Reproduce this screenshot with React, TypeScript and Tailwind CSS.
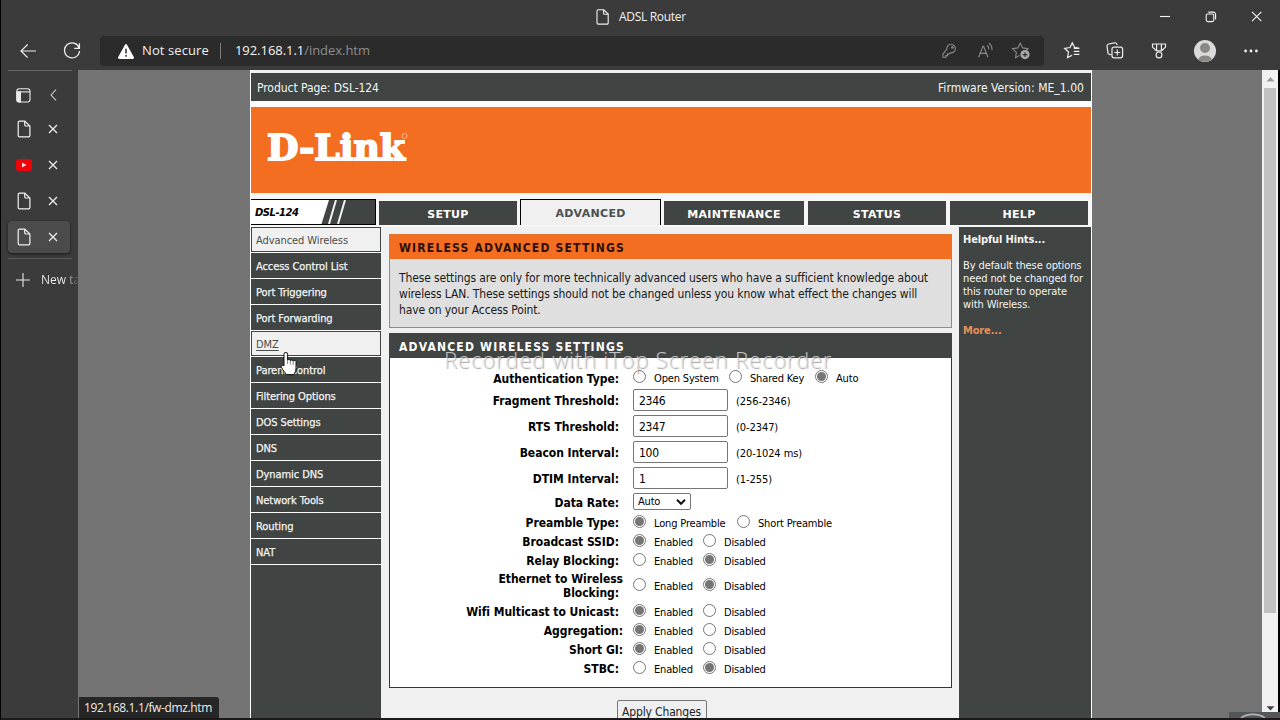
import React from "react";
import clsx from "clsx";

const NAV_ITEMS = [
  "Advanced Wireless",
  "Access Control List",
  "Port Triggering",
  "Port Forwarding",
  "DMZ",
  "Parent Control",
  "Filtering Options",
  "DOS Settings",
  "DNS",
  "Dynamic DNS",
  "Network Tools",
  "Routing",
  "NAT",
];

const PageIcon: React.FC = () => (
  <svg width="14" height="18" viewBox="0 0 14 18" fill="none" stroke="#f2f2f2" strokeWidth="1.2">
    <path d="M2.6 1.1h5.2L12.9 6v9.4a1.4 1.4 0 0 1-1.4 1.4H2.6a1.4 1.4 0 0 1-1.4-1.4V2.5a1.4 1.4 0 0 1 1.4-1.4z" />
    <path d="M7.7 1.2v3.6a1.2 1.2 0 0 0 1.2 1.2h3.9" />
  </svg>
);

const CloseIcon: React.FC = () => (
  <svg width="10" height="10" viewBox="0 0 10 10" stroke="#ededed" strokeWidth="1.3">
    <path d="M1 1l8 8M9 1L1 9" />
  </svg>
);

const TitleBar: React.FC = () => (
  <div className="flex h-[34px] shrink-0 items-center">
    <div className="flex flex-1 items-center pl-[594px]">
      <div className="flex h-[17px] w-[15px] items-center justify-center">
        <svg width="13" height="16" viewBox="0 0 13 16" fill="none" stroke="#f2f2f2" strokeWidth="1.1">
          <path d="M2.2.8h5.6l4.4 4.3v8.8a1.2 1.2 0 0 1-1.2 1.2H2.2A1.2 1.2 0 0 1 1 13.9V2A1.2 1.2 0 0 1 2.2.8z" />
          <path d="M7.6.9v3.3a1 1 0 0 0 1 1h3.5" />
        </svg>
      </div>
      <span className="pl-[9px] text-[12px] tracking-[-0.3px] text-[#f2f2f2]">ADSL Router</span>
    </div>
    <svg className="mr-[17px]" width="106" height="14" viewBox="0 0 106 14" fill="none" stroke="#f5f5f5" strokeWidth="1.1">
      <path d="M3 6.5h10" />
      <rect x="49.2" y="4" width="7.6" height="7.6" rx="1.6" />
      <path d="M51.3 2.1h5a2.3 2.3 0 0 1 2.3 2.3v5" />
      <path d="M95 1.8l9.4 9.4M104.4 1.8L95 11.2" />
    </svg>
  </div>
);

const AddressBar: React.FC = () => (
  <div className="flex h-[36px] shrink-0 items-center pb-[2px]">
    <svg className="ml-[19px]" width="16" height="14" viewBox="0 0 16 14" fill="none" stroke="#eee" strokeWidth="1.2">
      <path d="M16 7H1M7.6.5L1 7l6.6 6.5" />
    </svg>
    <svg className="ml-[27px]" width="18" height="18" viewBox="0 0 18 18" fill="none" stroke="#eee" strokeWidth="1.3">
      <path d="M16.2 6.2A7.5 7.5 0 1 0 16.5 9" />
      <path d="M16.4 1.2v5.2h-5.2" />
    </svg>
    <div className="ml-[19px] flex h-[30px] w-[944px] items-center rounded-[4px] bg-[#2b2b2b] pl-[18px]">
      <svg width="16" height="15" viewBox="0 0 16 15">
        <path d="M7 .8a1.2 1.2 0 0 1 2 0l6.8 12.3a1.2 1.2 0 0 1-1 1.8H1.2a1.2 1.2 0 0 1-1-1.8z" fill="#fff" />
        <path d="M8 4.8v4.8M8 11v1.7" stroke="#2b2b2b" strokeWidth="1.5" />
      </svg>
      <span className="pl-[8px] text-[13px] tracking-[0.1px] text-[#f0f0f0]">Not secure</span>
      <span className="ml-[11px] h-[16px] w-px bg-[#7c7c7c]" />
      <span className="pl-[14px] text-[13px] tracking-[-0.04px] text-[#f5f5f5]">
        192.168.1.1<span className="text-[#8d8d8d]">/index.htm</span>
      </span>
      <svg className="ml-auto mr-[11px]" width="92" height="18" viewBox="0 0 92 18" fill="none" stroke="#8a8a8a" strokeWidth="1.1">
        <path d="M5.8 7.2a4.3 4.3 0 1 1 3.4 3.6l-1 1.1H6.6v1.7H4.9v1.7H1.9v-3z" />
        <circle cx="11.4" cy="5.4" r=".8" />
        <path d="M37.6 15.3l4.4-11h.6l4.4 11M39.2 11.4h6.2" />
        <path d="M46 3.2a5 5 0 0 1 1.8 4.2M48 1.2a8 8 0 0 1 3 6.8" />
        <path d="M78.5 13.6l-4 2.1.9-5.3-3.9-3.7 5.3-.8 2.4-4.8 2.4 4.8 5.3.8-1.8 1.8" />
        <circle cx="84" cy="12.6" r="4.6" fill="#a9a9a9" stroke="none" />
        <path d="M81.6 12.6h4.8M84 10.2v4.8" stroke="#2b2b2b" />
      </svg>
    </div>
    <svg className="ml-[18px]" width="198" height="24" viewBox="0 0 198 24" fill="none" stroke="#ededed" strokeWidth="1.2">
      <path d="M16.8 9l-4.2-.6-2.3-4.6L8 8.5l-5.4.8 3.9 3.7-1 5.6 4.600-2.300M11.800 12.300h5.600M11.800 15.400h5.600M11.800 9.300h5.600" />
      <path d="M49.500 15.600l-2-.2a2 2 0 0 1-1.600-2L45 7.200a2 2 0 0 1 1.600-2.200l6-1.200a2 2 0 0 1 2.300 1.500l.2.900" />
      <rect x="50" y="8.2" width="10.6" height="10.6" rx="2" />
      <path d="M55.3 10.600v5.800M52.400 13.500h5.800" />
      <path d="M90.500 5h13v3.100l-4 3.700h-5l-4-3.700zM94.600 5v6.500M99.400 5v6.500" />
      <circle cx="97" cy="15.9" r="2.9" />
      <circle cx="143" cy="12" r="11" fill="#dadada" stroke="none" />
      <circle cx="143" cy="9" r="5" fill="#8b8783" stroke="none" />
      <path d="M136.200 20.400a7 5.200 0 0 1 13.600 0A11 11 0 0 1 136.200 20.400z" fill="#8b8783" stroke="none" />
      <g fill="#f2f2f2" stroke="none">
        <circle cx="183.6" cy="12" r="1.4" />
        <circle cx="189" cy="12" r="1.4" />
        <circle cx="194.4" cy="12" r="1.4" />
      </g>
    </svg>
  </div>
);

const SideTab: React.FC<{ active?: boolean; video?: boolean }> = ({ active, video }) => (
  <div
    className={clsx(
      "ml-[7px] flex h-[32px] w-[62px] items-center rounded-[4px]",
      active && "bg-[#4b4b4b] shadow-[0_1px_3px_rgba(0,0,0,0.6)]"
    )}
  >
    <div className="ml-[7px] flex w-[17px] justify-center">
      {video ? (
        <svg width="16" height="12" viewBox="0 0 16 12">
          <rect width="16" height="12" rx="3" fill="#f00008" />
          <path d="M6 3.5L10.5 6 6 8.5z" fill="#fbd5d5" />
        </svg>
      ) : (
        <PageIcon />
      )}
    </div>
    <div className="ml-[16px]">
      <CloseIcon />
    </div>
  </div>
);

const Sidebar: React.FC = () => (
  <div className="flex w-[77px] shrink-0 flex-col overflow-hidden">
    <div className="ml-[7px] h-px w-[64px] shrink-0 bg-[#666]" />
    <div className="flex h-[41px] shrink-0 items-center pt-[7px]">
      <svg className="ml-[15px]" width="15" height="15" viewBox="0 0 15 15" fill="none" stroke="#ececec" strokeWidth="1.1">
        <rect x=".8" y=".8" width="13.2" height="13.2" rx="2.4" />
        <path d="M1 3.9h13" />
        <path d="M1 4h3.400v10H2.600A1.700 1.700 0 0 1 1 12.400z" fill="#ececec" />
      </svg>
      <svg className="ml-[19px]" width="7" height="12" viewBox="0 0 7 12" fill="none" stroke="#c4c4c4" strokeWidth="1.1">
        <path d="M6 .7L1 6l5 5.3" />
      </svg>
    </div>
    <div className="flex flex-col gap-[4px] pt-px">
      <SideTab />
      <SideTab video />
      <SideTab />
      <SideTab active />
    </div>
    <div className="ml-[7px] mt-[5px] h-px w-[64px] shrink-0 bg-[#5a5a5a]" />
    <div className="flex h-[41px] items-center">
      <svg className="ml-[15px] shrink-0" width="14" height="14" viewBox="0 0 14 14" stroke="#e8e8e8" strokeWidth="1.1">
        <path d="M7 0v14M0 7h14" />
      </svg>
      <span className="ml-[11px] whitespace-nowrap bg-linear-to-r from-[#eeeeee] from-60% to-[#3b3b3b] bg-clip-text text-[12px] text-transparent">
        New ta
      </span>
    </div>
  </div>
);

const ModelBadge: React.FC = () => (
  <div className="flex h-[26px] w-[126px] items-center border border-black bg-white">
    <span className="w-[70px] whitespace-nowrap pl-[4px] pt-px font-['DejaVu_Sans'] text-[10px] font-bold italic tracking-[-0.5px] text-black">
      DSL-124
    </span>
    <svg width="54" height="24" viewBox="0 0 54 24">
      <path d="M8 0H54v24H0.500z" fill="#404442" />
      <path d="M15 0L8 24M24 0l-7 24" stroke="#f4f4f4" strokeWidth="2" />
    </svg>
  </div>
);

const Tab: React.FC<{ label: string; className: string }> = ({ label, className }) => (
  <div
    className={clsx(
      "flex h-[24px] items-center justify-center bg-[#404442] pt-[5px] font-['DejaVu_Sans'] text-[11px] font-bold tracking-[0.3px] text-white",
      className
    )}
  >
    {label}
  </div>
);

const Nav: React.FC = () => (
  <div className="flex w-[130px] flex-col bg-[#404442]">
    {NAV_ITEMS.map((item, i) => {
      const light = i === 0 || item === "DMZ";
      return (
        <div
          key={item}
          className={clsx(
            "flex h-[26px] shrink-0 items-center border-b border-white text-[11px] tracking-[-0.08px]",
            light ? "text-[#4a4d4c]" : "pl-[5px] pt-[3px] text-[#f4f4f4] [-webkit-text-stroke:0.25px_#f4f4f4]"
          )}
        >
          <span
            className={clsx(
              "whitespace-nowrap",
              light && "flex h-[25px] w-[130px] items-center border border-[#404442] bg-[#f0f0f0] pl-[4px] pt-[3px]",
              item === "DMZ" && "underline underline-offset-2"
            )}
          >
            {item}
          </span>
        </div>
      );
    })}
  </div>
);

const Radio: React.FC<{ label: string; checked?: boolean; className?: string }> = ({ label, checked, className }) => (
  <div className={clsx("flex items-center", className)}>
    <span className="mb-[3px] flex size-[13px] shrink-0 items-center justify-center rounded-full border border-[#767676] bg-white">
      {checked && <span className="size-[9px] rounded-full bg-[#757575]" />}
    </span>
    <span className="whitespace-nowrap pl-[8px] pt-[3px] text-[11px] tracking-[-0.16px]">{label}</span>
  </div>
);

const Row: React.FC<{ label: React.ReactNode; wide?: boolean; className?: string; children: React.ReactNode }> = ({
  label,
  wide,
  className,
  children,
}) => (
  <div className={clsx("flex items-center", className ?? "h-[19px]")}>
    <div
      className={clsx(
        "shrink-0 whitespace-nowrap text-right text-[12px] font-bold leading-[14px] tracking-[-0.04px]",
        wide ? "mr-[10px] w-[233px]" : "mr-[14px] w-[229px]",
        className && !wide && "pt-[2px]"
      )}
    >
      {label}
    </div>
    {children}
  </div>
);

const Field: React.FC<{ value: string; hint: string }> = ({ value, hint }) => (
  <>
    <div className="flex h-[22px] w-[95px] items-center rounded-[2px] border border-[#767676] bg-white pl-[5px] pt-[2px] text-[12px] tracking-[-0.3px]">
      {value}
    </div>
    <span className="pl-[8px] pt-[4px] text-[11px] tracking-[-0.08px]">{hint}</span>
  </>
);

const EnabledDisabled: React.FC<{ on: boolean }> = ({ on }) => (
  <>
    <Radio label="Enabled" checked={on} className="w-[70px]" />
    <Radio label="Disabled" checked={!on} />
  </>
);

const SettingsForm: React.FC = () => (
  <div className="h-[330px] shrink-0 border border-t-0 border-[#333635] bg-white pt-[11px] text-black">
    <Row label="Authentication Type:" className="h-[18px]">
      <Radio label="Open System" className="w-[96px]" />
      <Radio label="Shared Key" className="w-[86px]" />
      <Radio label="Auto" checked />
    </Row>
    <Row label="Fragment Threshold:" className="h-[26px]">
      <Field value="2346" hint="(256-2346)" />
    </Row>
    <Row label="RTS Threshold:" className="h-[26px]">
      <Field value="2347" hint="(0-2347)" />
    </Row>
    <Row label="Beacon Interval:" className="h-[26px]">
      <Field value="100" hint="(20-1024 ms)" />
    </Row>
    <Row label="DTIM Interval:" className="h-[26px]">
      <Field value="1" hint="(1-255)" />
    </Row>
    <Row label="Data Rate:" className="h-[22px]">
      <div className="mb-px flex h-[17px] w-[58px] items-center justify-between rounded-[2px] border border-[#767676] pl-[4px] pr-[4px] pt-px text-[11px] tracking-[-0.2px]">
        Auto
        <svg width="10" height="6" viewBox="0 0 10 6" fill="none" stroke="#111" strokeWidth="2">
          <path d="M1 .8l4 4 4-4" />
        </svg>
      </div>
    </Row>
    <Row label="Preamble Type:">
      <Radio label="Long Preamble" checked className="w-[104px]" />
      <Radio label="Short Preamble" />
    </Row>
    <Row label="Broadcast SSID:">
      <EnabledDisabled on />
    </Row>
    <Row label="Relay Blocking:">
      <EnabledDisabled on={false} />
    </Row>
    <Row
      label={
        <>
          Ethernet to Wireless
          <br />
          <span className="pr-[4px]">Blocking:</span>
        </>
      }
      wide
      className="h-[32px]"
    >
      <EnabledDisabled on={false} />
    </Row>
    <Row label="Wifi Multicast to Unicast:">
      <EnabledDisabled on />
    </Row>
    <Row label="Aggregation:" wide>
      <EnabledDisabled on />
    </Row>
    <Row label="Short GI:" wide>
      <EnabledDisabled on />
    </Row>
    <Row label="STBC:">
      <EnabledDisabled on={false} />
    </Row>
  </div>
);

const RouterPage: React.FC = () => (
  <div className="flex w-[842px] shrink-0 flex-col overflow-hidden border-x border-white bg-[#f0f0f0] font-['DejaVu_Sans_Condensed',sans-serif]">
    <div className="mt-[3px] flex h-[28px] shrink-0 items-center justify-between bg-[#404442] pl-[6px] pr-[7px] pt-[2px] text-[12px] text-[#f6f6f6]">
      <span className="tracking-[-0.05px]">Product Page: DSL-124</span>
      <span className="tracking-[0.04px]">Firmware Version: ME_1.00</span>
    </div>
    <div className="h-[6px] shrink-0 bg-white" />
    <div className="h-[86px] shrink-0 bg-[#f36e21]">
      <svg width="200" height="86" viewBox="0 0 200 86">
        <text
          x="16"
          y="53"
          textLength="138"
          lengthAdjust="spacingAndGlyphs"
          className="fill-white stroke-white stroke-[1.8px] font-['DejaVu_Serif',serif] text-[35px] font-bold"
        >
          D-Link
        </text>
        <circle cx="153.5" cy="29" r="2.6" fill="none" stroke="#f9b58c" strokeWidth="1" />
      </svg>
    </div>
    <div className="-ml-px flex h-[34px] shrink-0 items-end bg-[#f6f6f6] pb-[2px]">
      <ModelBadge />
      <Tab label="SETUP" className="ml-[3px] w-[138px]" />
      <div className="ml-[3px] flex h-[26px] w-[141px] items-center justify-center border border-b-0 border-black bg-[#f0f0f0] pt-[4px] font-['DejaVu_Sans'] text-[11px] font-bold tracking-[0.3px] text-[#4c5150]">
        ADVANCED
      </div>
      <Tab label="MAINTENANCE" className="ml-[3px] w-[140px]" />
      <Tab label="STATUS" className="ml-[4px] w-[138px]" />
      <Tab label="HELP" className="ml-[4px] w-[138px]" />
    </div>
    <div className="flex min-h-0 flex-1">
      <Nav />
      <div className="flex w-[578px] flex-col pl-[8px] pr-[7px] pt-[7px]">
        <div className="h-[94px] shrink-0 border border-[#e0732d] bg-[#dfdfdf]">
          <div className="flex h-[24px] items-center bg-[#f36e21] pl-[9px] pt-[2px] text-[12px] font-bold tracking-[1.2px] text-[#2b0f06]">
            WIRELESS ADVANCED SETTINGS
          </div>
          <p className="whitespace-nowrap pl-[9px] pt-[11px] text-[12px] leading-[16px] tracking-[-0.13px] text-[#1a1a1a]">
            These settings are only for more technically advanced users who have a sufficient knowledge about
            <br />
            wireless LAN. These settings should not be changed unless you know what effect the changes will
            <br />
            have on your Access Point.
          </p>
        </div>
        <div className="mt-[5px] flex h-[25px] shrink-0 items-center bg-[#404442] pl-[10px] pt-[3px] text-[12px] font-bold tracking-[1.2px] text-white">
          ADVANCED WIRELESS SETTINGS
        </div>
        <SettingsForm />
        <div className="flex shrink-0 justify-center pr-[18px] pt-[12px]">
          <button className="h-[22px] w-[90px] rounded-[2px] border border-[#767676] bg-[#efefef] pt-[2px] text-[12px] leading-[18px] tracking-[-0.14px] text-[#222]">
            Apply Changes
          </button>
        </div>
      </div>
      <div className="w-[132px] bg-[#404442] pl-[4px] pt-[6px] text-[11px] leading-[13px] text-[#f4f4f4]">
        <p className="pb-[13px] font-bold tracking-[-0.14px]">Helpful Hints...</p>
        <p className="whitespace-nowrap pb-[13px] tracking-[-0.1px]">
          By default these options
          <br />
          need not be changed for
          <br />
          this router to operate
          <br />
          with Wireless.
        </p>
        <p className="font-bold tracking-[-0.14px] text-[#e69256]">More...</p>
      </div>
    </div>
  </div>
);

const Scrollbar: React.FC = () => (
  <div className="flex w-[16px] flex-col items-center bg-[#f1f1f1]">
    <svg className="mt-[7px]" width="9" height="5" viewBox="0 0 9 5">
      <path d="M4.5 0L8.5 4.6H.5z" fill="#9b9b9b" />
    </svg>
    <div className="mt-[6px] h-[525px] w-[12px] bg-[#c1c1c1]" />
    <svg className="mb-[7px] mt-auto" width="9" height="5" viewBox="0 0 9 5">
      <path d="M4.5 4.6L8.5.2H.5z" fill="#404348" />
    </svg>
  </div>
);

const HandCursor: React.FC = () => (
  <svg className="absolute left-[279px] top-[351px]" width="18" height="26" viewBox="0 0 18 26">
    <path
      d="M4 3.2a1.8 1.8 0 0 1 3.6 0v6a1.6 1.6 0 0 1 2.8.4 1.6 1.6 0 0 1 2.8.8 1.5 1.5 0 0 1 2.8 1.2v5.6c0 3-1.2 4.2-1.8 6.400H6.200C5.400 21.200 2.600 19.400 1.500 16.200.9 14.400 2.400 13.400 4 15z"
      fill="#fff"
      stroke="#111"
      strokeWidth="1"
    />
    <path d="M7.6 9.2v4M10.4 10v3.4M13.2 11v3" stroke="#555" strokeWidth=".7" />
  </svg>
);

export default function App() {
  return (
    <div className="relative flex h-[720px] w-[1280px] flex-col overflow-hidden border-b-2 border-l border-b-[#1b191a] border-l-black bg-[#3b3b3b] font-['Open_Sans',sans-serif]">
      <TitleBar />
      <AddressBar />
      <div className="flex min-h-0 flex-1">
        <Sidebar />
        <div className="flex min-w-0 flex-1 bg-[#747474]">
          <div className="flex min-w-0 flex-1 pl-[172px]">
            <RouterPage />
          </div>
          <Scrollbar />
          <div className="w-[2px] bg-black" />
        </div>
      </div>

      <HandCursor />
      <div className="absolute left-[443px] top-[344px] whitespace-nowrap text-[22px] font-light leading-[30px] tracking-[0.8px] text-[#e6e6e6]/80 [text-shadow:1px_1px_1px_rgba(90,90,90,0.55)]">
        Recorded with iTop Screen Recorder
      </div>
      <div className="absolute bottom-0 left-[78px] flex h-[21px] w-[140px] items-center rounded-tr-[3px] bg-[#262626] pl-[5px] text-[12px] tracking-[-0.36px] text-[#ececec]">
        192.168.1.1/fw-dmz.htm
      </div>
      <svg className="absolute bottom-0 right-0" width="51" height="6" viewBox="0 0 51 6">
        <path d="M0 0h51v6H0z" fill="#54575a" />
        <path d="M12 6a15 9 0 0 1 24 0" fill="none" stroke="#b4b4b4" strokeWidth="1.6" />
      </svg>
    </div>
  );
}
